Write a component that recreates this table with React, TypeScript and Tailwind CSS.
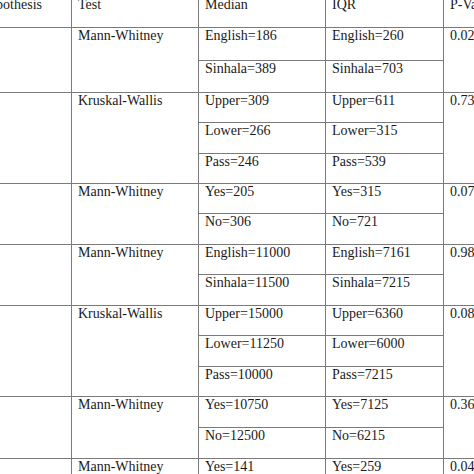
import React from 'react';

type Group = { test: string; p: string; rows: [string, string][] };

const groups: Group[] = [
  { test: 'Mann-Whitney', p: '0.025', rows: [['English=186', 'English=260'], ['Sinhala=389', 'Sinhala=703']] },
  { test: 'Kruskal-Wallis', p: '0.734', rows: [['Upper=309', 'Upper=611'], ['Lower=266', 'Lower=315'], ['Pass=246', 'Pass=539']] },
  { test: 'Mann-Whitney', p: '0.075', rows: [['Yes=205', 'Yes=315'], ['No=306', 'No=721']] },
  { test: 'Mann-Whitney', p: '0.985', rows: [['English=11000', 'English=7161'], ['Sinhala=11500', 'Sinhala=7215']] },
  { test: 'Kruskal-Wallis', p: '0.088', rows: [['Upper=15000', 'Upper=6360'], ['Lower=11250', 'Lower=6000'], ['Pass=10000', 'Pass=7215']] },
  { test: 'Mann-Whitney', p: '0.366', rows: [['Yes=10750', 'Yes=7125'], ['No=12500', 'No=6215']] },
  { test: 'Mann-Whitney', p: '0.045', rows: [['Yes=141', 'Yes=259'], ['No=198', 'No=301']] },
];

// row heights in px, one per sub row, measured from the picture
const heights = [33, 32, 30, 31, 30, 30, 31, 30, 31, 30, 31, 30, 31, 31, 31, 31];

const cell = 'border border-[#7a7a7a] align-top pl-[6px] pt-0 leading-[16px] text-left font-normal whitespace-nowrap';

export default function App() {
  let k = 0;
  return (
    <div className="w-[474px] h-[474px] overflow-hidden bg-white">
      <table
        className="-ml-[28px] -mt-[4px] w-[561px] table-fixed border-collapse text-[14px] text-[#1a1a1a]"
        style={{ fontFamily: '"Liberation Serif", "Times New Roman", serif' }}
      >
        <colgroup>
          <col className="w-[99px]" />
          <col className="w-[127px]" />
          <col className="w-[127px]" />
          <col className="w-[118px]" />
          <col className="w-[90px]" />
        </colgroup>
        <thead>
          <tr className="h-[31px]">
            <th className={cell}>Hypothesis</th>
            <th className={cell}>Test</th>
            <th className={cell}>Median</th>
            <th className={cell}>IQR</th>
            <th className={cell}>P-Value</th>
          </tr>
        </thead>
        <tbody>
          {groups.map((g, gi) =>
            g.rows.map((r, ri) => {
              const h = heights[k++];
              return (
                <tr key={`${gi}-${ri}`} style={{ height: h }}>
                  {ri === 0 && (
                    <>
                      <td className={cell} rowSpan={g.rows.length}></td>
                      <td className={cell} rowSpan={g.rows.length}>{g.test}</td>
                    </>
                  )}
                  <td className={cell}>{r[0]}</td>
                  <td className={cell}>{r[1]}</td>
                  {ri === 0 && (
                    <td className={cell} rowSpan={g.rows.length}>{g.p}</td>
                  )}
                </tr>
              );
            })
          )}
        </tbody>
      </table>
    </div>
  );
}
